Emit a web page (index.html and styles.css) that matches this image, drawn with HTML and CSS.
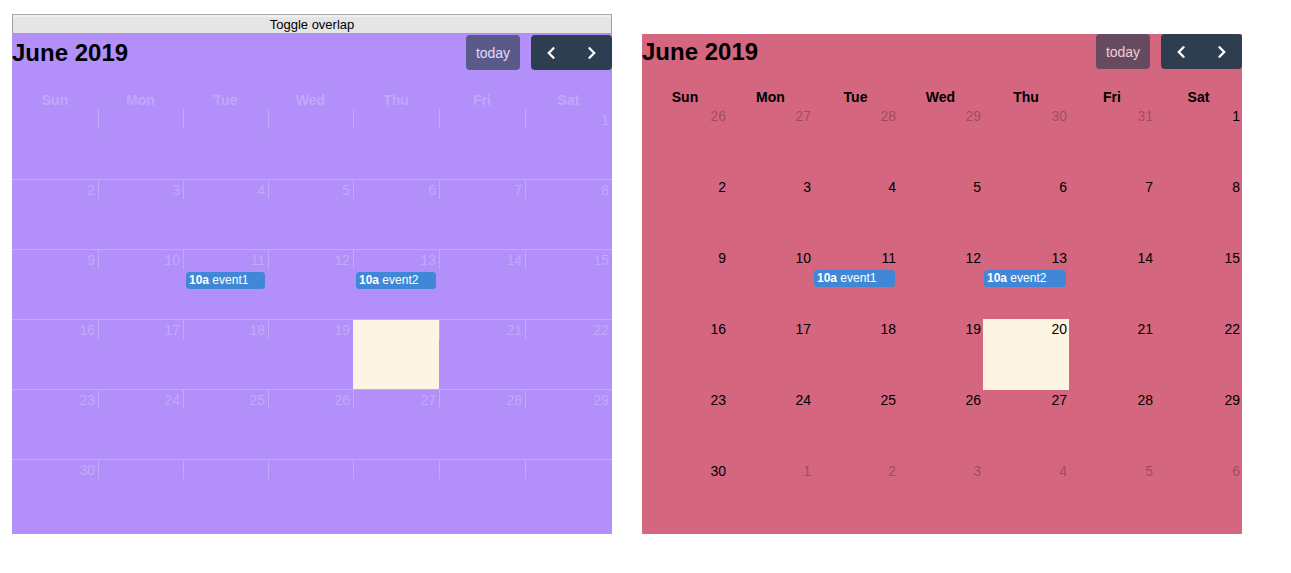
FILE: index.html
```html
<!DOCTYPE html>
<html lang="en">
<head>
  <meta charset="UTF-8" />
  <title>Calendar overlap</title>
  <link rel="stylesheet" href="styles.css">
</head>
<body>

  <div class="page">
    <div class="col">
      <button class="toggle">Toggle overlap</button>
      <div class="cal cal-overlap" id="cal1">
        <div class="cal-head">
          <h2>June 2019</h2>
          <div class="tools">
            <button class="today-btn">today</button>
            <div class="nav">
              <button class="nav-btn"><svg width="8" height="12" viewBox="0 0 8 12"><polyline points="6.5,1.2 1.8,6 6.5,10.8" /></svg></button>
              <button class="nav-btn"><svg width="8" height="12" viewBox="0 0 8 12"><polyline points="1.5,1.2 6.2,6 1.5,10.8" /></svg></button>
            </div>
          </div>
        </div>
        <div class="dow"></div>
        <div class="weeks"></div>
      </div>
    </div>

    <div class="col col-right">
      <div class="cal cal-plain" id="cal2">
        <div class="cal-head">
          <h2>June 2019</h2>
          <div class="tools">
            <button class="today-btn">today</button>
            <div class="nav">
              <button class="nav-btn"><svg width="8" height="12" viewBox="0 0 8 12"><polyline points="6.5,1.2 1.8,6 6.5,10.8" /></svg></button>
              <button class="nav-btn"><svg width="8" height="12" viewBox="0 0 8 12"><polyline points="1.5,1.2 6.2,6 1.5,10.8" /></svg></button>
            </div>
          </div>
        </div>
        <div class="dow"></div>
        <div class="weeks"></div>
      </div>
    </div>
  </div>

  <script>
    const dayNames = ['Sun', 'Mon', 'Tue', 'Wed', 'Thu', 'Fri', 'Sat'];
    const events = { 11: 'event1', 13: 'event2' };
    const today = 20;

    function buildCal(id, showOther) {
      const cal = document.getElementById(id);
      const dow = cal.querySelector('.dow');
      dayNames.forEach(n => {
        dow.innerHTML += `<div>${n}</div>`;
      });

      const weeks = cal.querySelector('.weeks');
      // June 2019 starts on a Saturday, grid starts May 26
      let html = '';
      for (let w = 0; w < 6; w++) {
        html += '<div class="week">';
        for (let d = 0; d < 7; d++) {
          const i = w * 7 + d;
          let num = i - 5;
          let other = false;
          if (num < 1) { num = 31 + num; other = true; }
          else if (num > 30) { num = num - 30; other = true; }

          let cls = 'day';
          if (other) cls += ' other';
          if (!other && num === today) cls += ' today';

          let label = other && !showOther ? '' : num;
          html += `<div class="${cls}"><div class="num">${label}</div>`;
          if (!other && events[num]) {
            html += `<div class="ev"><b>10a</b> ${events[num]}</div>`;
          }
          html += '</div>';
        }
        html += '</div>';
      }
      weeks.innerHTML = html;
    }

    buildCal('cal1', false);
    buildCal('cal2', true);
  </script>
</body>
</html>
```

FILE: styles.css
```css
body {
  margin: 0;
  background: #fff;
  font-family: "Liberation Sans", Arial, sans-serif;
  color: #000;
}

.page {
  display: flex;
  align-items: flex-start;
  gap: 30px;
  padding: 14px 12px;
}

.col {
  width: 600px;
}

.col-right {
  margin-top: 20px;
}

.toggle {
  display: block;
  width: 600px;
  height: 20px;
  margin: 0;
  padding: 0;
  font-family: "Liberation Sans", Arial, sans-serif;
  font-size: 13px;
  color: #000;
  background: linear-gradient(#f0f0f0 0, #f0f0f0 2px, #e5e5e5 2px);
  border: 1px solid #a3a3a3;
  border-top-color: #a8a8a8;
}

.cal {
  height: 500px;
  display: flex;
  flex-direction: column;
}

.cal-overlap {
  background: #b28ff9;
}

.cal-plain {
  background: #d4667f;
}

/* toolbar */
.cal-head {
  display: flex;
  justify-content: space-between;
  align-items: flex-end;
  height: 36px;
}

.cal-plain .cal-head {
  height: 35px;
}

.cal-head h2 {
  margin: 0;
  font-size: 24px;
  line-height: 35px;
  align-self: center;
}

.tools {
  display: flex;
  gap: 11px;
}

.today-btn {
  width: 54px;
  height: 35px;
  padding: 0;
  border: none;
  border-radius: 4px;
  background: #2c3e50;
  color: #fff;
  opacity: 0.65;
  font-family: "Liberation Sans", Arial, sans-serif;
  font-size: 14px;
}

.nav {
  display: flex;
  width: 81px;
  height: 35px;
  background: #2c3e50;
  border-radius: 4px;
}

.nav-btn {
  flex: 1;
  display: flex;
  align-items: center;
  justify-content: center;
  padding: 0;
  border: none;
  background: none;
}

.nav-btn polyline {
  fill: none;
  stroke: #fff;
  stroke-width: 2.3;
  stroke-linecap: round;
  stroke-linejoin: miter;
}

/* day names */
.dow,
.week {
  display: grid;
  grid-template-columns: 86px 85px 85px 85px 86px 86px 87px;
}

.dow {
  font-size: 14px;
  font-weight: bold;
  text-align: center;
}

.cal-overlap .dow {
  margin-top: 21px;
  line-height: 18px;
  color: #c3a7fb;
}

.cal-plain .dow {
  margin-top: 20px;
  line-height: 17px;
}

/* grid */
.week {
  box-sizing: border-box;
}

.cal-overlap .week {
  height: 70px;
}

.cal-overlap .week + .week {
  border-top: 1px solid #c3a8fb;
}

.cal-plain .week {
  height: 71px;
}

.day {
  position: relative;
  min-width: 0;
}

.num {
  box-sizing: border-box;
  height: 20px;
  font-size: 14px;
  line-height: 16px;
  text-align: right;
}

.cal-overlap .num {
  padding: 3px 3px 1px;
  color: #c5a9fb;
}

.cal-overlap .day + .day .num {
  border-left: 1px solid #c3a8fb;
}

.cal-overlap .week + .week .num {
  padding-top: 2px;
  height: 19px;
}

.cal-plain .num {
  padding: 2px 2px;
}

.cal-plain .other .num {
  color: rgba(0, 0, 0, 0.27);
}

.cal-plain .today {
  background: #fcf5e4;
}

/* in overlap mode the today background sits over the cell */
.cal-overlap .today::after {
  content: "";
  position: absolute;
  inset: 0;
  background: #fcf5e4;
}

.ev {
  height: 17px;
  box-sizing: border-box;
  padding-left: 2px;
  border: 1px solid #4088d7;
  border-radius: 3px;
  background: #4088d7;
  color: #fff;
  font-size: 12px;
  line-height: 15px;
  white-space: nowrap;
  overflow: hidden;
}

.cal-overlap .ev {
  margin: 3px 3px 0 3px;
}

.cal-plain .ev {
  margin: 2px 3px 0 1px;
}
```
